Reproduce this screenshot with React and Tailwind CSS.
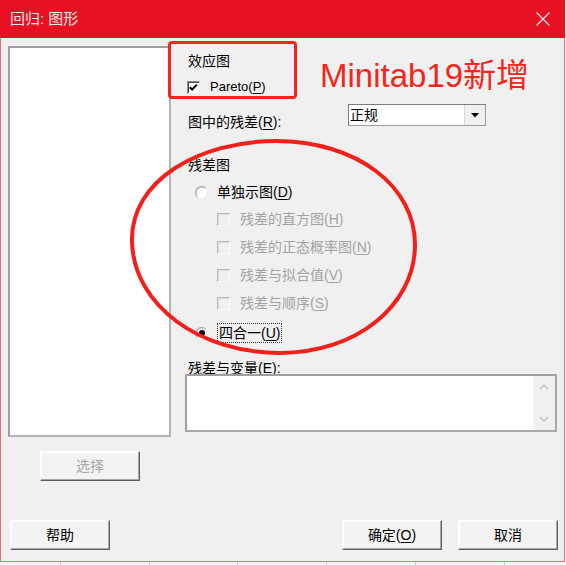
import React from "react";

function U({ children }) {
  return <span className="underline underline-offset-[2px] decoration-1">{children}</span>;
}

function Checkbox({ checked, disabled }) {
  return (
    <span
      className={
        disabled
          ? "relative inline-block w-[13px] h-[13px] shrink-0 border border-t-[#b9b9b9] border-l-[#b9b9b9] border-b-[#fafafa] border-r-[#fafafa] bg-[#f0f0f0] shadow-[inset_1px_1px_0_#dadada]"
          : "relative inline-block w-[13px] h-[13px] shrink-0 border border-t-[#8a8a8a] border-l-[#8a8a8a] border-b-[#e6e6e6] border-r-[#e6e6e6] bg-white shadow-[inset_1px_1px_0_#4a4a4a]"
      }
    >
      {checked && (
        <svg className="absolute left-0 top-0" width="11" height="11" viewBox="0 0 11 11">
          <path d="M1.8 5.2 L4.2 7.6 L8.8 2.6" stroke="#000" strokeWidth="2" fill="none" />
        </svg>
      )}
    </span>
  );
}

function Radio({ checked }) {
  return (
    <span className="inline-flex items-center justify-center w-[13px] h-[13px] shrink-0 rounded-full bg-white border border-t-[#a0a0a0] border-l-[#a0a0a0] border-b-[#ececec] border-r-[#ececec] shadow-[inset_1px_1px_0_#d4d4d4]">
      {checked && <span className="w-[6px] h-[6px] rounded-full bg-black" />}
    </span>
  );
}

function Btn({ children, disabled, className }) {
  return (
    <div
      className={
        "flex items-center justify-center w-[100px] h-[30px] bg-[#f3f3f3] border border-t-white border-l-white border-b-[#5f5f5f] border-r-[#5f5f5f] shadow-[inset_-1px_-1px_0_#a8a8a8,inset_1px_1px_0_#fdfdfd] text-[14px] leading-[20px] " +
        (disabled ? "text-[#a6a6a6] " : "text-black ") +
        (className || "")
      }
    >
      {children}
    </div>
  );
}

export default function App() {
  return (
    <div className="relative w-[566px] h-[565px] overflow-hidden bg-[#f6f6f6] font-['Liberation_Sans','Noto_Sans_CJK_SC',sans-serif] text-[14px] text-black">
      <div className="w-[565px] h-[562px] flex flex-col">
        {/* Title bar */}
        <div className="h-[38px] bg-[#e81123] flex items-center justify-between pl-[10px] pr-[15px] shrink-0">
          <span className="text-[15px] leading-[20px] text-[#fde9eb]">回归: 图形</span>
          <svg width="14" height="14" viewBox="0 0 14 14">
            <path d="M0.5 0.5 L13.5 13.5 M13.5 0.5 L0.5 13.5" stroke="#fde9eb" strokeWidth="1.2" />
          </svg>
        </div>

        {/* Body */}
        <div className="flex-1 flex flex-col bg-[#f0f0f0] border-l border-r border-b border-[#e4707c]">
          <div className="flex pt-[8px]">
            {/* Left column */}
            <div className="ml-[7px] w-[163px] flex flex-col">
              <div className="h-[391px] bg-white border-2 border-t-[#a0a0a0] border-l-[#a0a0a0] border-b-[#b4b4b4] border-r-[#b4b4b4]" />
              <Btn disabled className="mt-[14px] ml-[32px]">选择</Btn>
            </div>

            {/* Right column */}
            <div className="ml-[14px] w-[372px] flex flex-col">
              <div className="mt-[5px] h-[20px] leading-[20px] pl-[3px]">效应图</div>
              <div className="mt-[6px] h-[20px] flex items-center pl-[2px] gap-[10px]">
                <Checkbox checked />
                <span className="leading-[20px] text-[13px]">
                  Pareto(<U>P</U>)
                </span>
              </div>
              <div className="mt-[7px] h-[22px] flex items-start">
                <div className="w-[163px] pl-[3px] pt-[8px] leading-[20px]">
                  图中的残差(<U>R</U>):
                </div>
                <div className="w-[138px] h-[22px] flex bg-white border border-t-[#7c7c7c] border-l-[#7c7c7c] border-b-[#9a9a9a] border-r-[#9a9a9a]">
                  <div className="flex-1 pl-[1px] text-[14px] leading-[20px]">正规</div>
                  <div className="w-[21px] h-[20px] flex items-center justify-center bg-[#f0f0f0] border-l border-[#d8d8d8]">
                    <svg width="8" height="5" viewBox="0 0 8 5">
                      <path d="M0 0 L8 0 L4 4.5 Z" fill="#000" />
                    </svg>
                  </div>
                </div>
              </div>

              <div className="mt-[29px] h-[20px] leading-[20px] pl-[3px]">残差图</div>
              <div className="mt-[7px] h-[20px] flex items-center pl-[10px] gap-[9px]">
                <Radio />
                <span className="leading-[20px]">
                  单独示图(<U>D</U>)
                </span>
              </div>
              <div className="mt-[3px] flex flex-col text-[#a3a3a3]">
                <div className="h-[28px] flex items-center pl-[32px] gap-[10px]">
                  <Checkbox disabled />
                  <span>
                    残差的直方图(<U>H</U>)
                  </span>
                </div>
                <div className="h-[28px] flex items-center pl-[32px] gap-[10px]">
                  <Checkbox disabled />
                  <span>
                    残差的正态概率图(<U>N</U>)
                  </span>
                </div>
                <div className="h-[28px] flex items-center pl-[32px] gap-[10px]">
                  <Checkbox disabled />
                  <span>
                    残差与拟合值(<U>V</U>)
                  </span>
                </div>
                <div className="h-[28px] flex items-center pl-[32px] gap-[10px]">
                  <Checkbox disabled />
                  <span>
                    残差与顺序(<U>S</U>)
                  </span>
                </div>
              </div>
              <div className="mt-[6px] h-[20px] flex items-center pl-[10px] gap-[9px]">
                <Radio checked />
                <span className="border border-dotted border-[#333] px-[1px] leading-[18px]">
                  四合一(<U>U</U>)
                </span>
              </div>

              <div className="mt-[15px] h-[16px] leading-[20px] pl-[3px]">
                残差与变量(<U>E</U>):
              </div>
              <div className="h-[58px] flex bg-white border-2 border-t-[#a0a0a0] border-l-[#a0a0a0] border-b-[#a8a8a8] border-r-[#a8a8a8]">
                <div className="flex-1" />
                <div className="w-[22px] bg-[#f0f0f0] flex flex-col items-center justify-between py-[8px]">
                  <svg width="10" height="6" viewBox="0 0 10 6">
                    <path d="M1 5 L5 1 L9 5" stroke="#c2c2c2" strokeWidth="1.4" fill="none" />
                  </svg>
                  <svg width="10" height="6" viewBox="0 0 10 6">
                    <path d="M1 1 L5 5 L9 1" stroke="#c2c2c2" strokeWidth="1.4" fill="none" />
                  </svg>
                </div>
              </div>
            </div>
          </div>

          {/* Bottom buttons */}
          <div className="mt-auto mb-[11px] flex pl-[9px] pr-[6px]">
            <Btn>帮助</Btn>
            <Btn className="ml-auto">
              <span>
                确定(<U>O</U>)
              </span>
            </Btn>
            <Btn className="ml-[16px]">取消</Btn>
          </div>
        </div>
      </div>

      {/* sheet behind */}
      <div className="flex h-[3px] bg-[#f8f8f8]">
        <div className="w-[61px] border-r border-[#c8c8c8]" />
        <div className="w-[89px] border-r border-[#c8c8c8]" />
        <div className="w-[88px] border-r border-[#c8c8c8]" />
        <div className="w-[89px] border-r border-[#c8c8c8]" />
        <div className="w-[89px] border-r border-[#c8c8c8]" />
        <div className="w-[89px] border-r border-[#c8c8c8]" />
      </div>

      {/* Annotations */}
      <div className="absolute left-[168px] top-[41px] w-[129px] h-[58px] border-[3px] border-[#f4261c] rounded-[4px] pointer-events-none" />
      <div className="absolute left-[320px] top-[59px] text-[33px] leading-[33px] text-[#f4261c] whitespace-nowrap">
        Minitab19新增
      </div>
      <svg className="absolute left-0 top-0 pointer-events-none" width="566" height="565" viewBox="0 0 566 565">
        <path
          d="M132 242 C130 180 200 141 276 141 C356 141 416 186 415 246 C414 306 356 353 280 353 C200 353 134 306 132 242 Z"
          stroke="#f2201a"
          strokeWidth="4"
          fill="none"
        />
      </svg>
    </div>
  );
}
